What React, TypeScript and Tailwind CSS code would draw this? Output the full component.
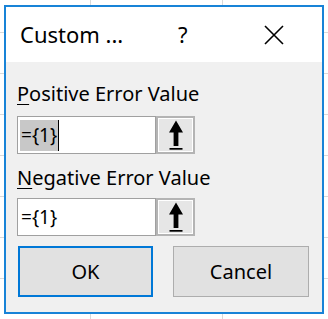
import React from "react";

function RefButton() {
  return (
    <div className="flex h-[38px] w-[39px] shrink-0 border-2 border-[#b4b4b4] bg-[#b4b4b4]">
      <div className="flex flex-1 items-center justify-center border border-white bg-[#e6e6e6]">
        <svg width="14" height="30" viewBox="0 0 14 30">
          <path d="M7 0.5 L0 12.5 L4.6 12.5 L4.6 26 L9.4 26 L9.4 12.5 L14 12.5 Z" fill="#000" />
          <rect x="0.5" y="28" width="13" height="1.7" fill="#000" />
        </svg>
      </div>
    </div>
  );
}

function Field({ selected }: { selected?: boolean }) {
  return (
    <div className="flex h-[38px] w-[178px]">
      <div className="flex flex-1 items-center border border-[#a0a0a0] bg-white pl-[2px]">
        <span
          className={
            selected
              ? "bg-[#c8c8c8] pl-[1px] pr-[1px] text-[19px] leading-[31px] text-black"
              : "pl-[1px] pr-[1px] text-[19px] leading-[31px] text-black"
          }
        >
          ={"{"}1{"}"}
        </span>
        {selected ? <span className="h-[31px] w-[1px] bg-black" /> : null}
      </div>
      <RefButton />
    </div>
  );
}

export default function App() {
  return (
    <div
      className="h-[319px] w-[328px] overflow-hidden bg-white bg-[linear-gradient(to_right,#d9d9d9_1px,transparent_1px),linear-gradient(to_bottom,#d9d9d9_1px,transparent_1px)] bg-[size:132px_41px] bg-[position:90px_32px] pl-[4px] pt-[5px]"
      style={{ fontFamily: '"Noto Sans", "Open Sans", sans-serif' }}
    >
      <div className="flex h-[309px] w-[320px] flex-col border-2 border-[#1883d7] bg-[#f0f0f0]">
        <div className="flex h-[55px] shrink-0 items-center bg-white pl-[14px] text-[22px] text-black">
          <span className="w-[158px]">Custom ...</span>
          <span className="w-[86px]">?</span>
          <svg width="20" height="20" viewBox="0 0 20 20">
            <path d="M1 1 L19 19 M19 1 L1 19" stroke="#000" strokeWidth="1.6" />
          </svg>
        </div>
        <div className="flex flex-col pl-[11px] pr-[12px]">
          <div className="mt-[19px] text-[20px] leading-[26px] text-black">
            <span className="underline decoration-1 underline-offset-3">P</span>ositive Error Value
          </div>
          <div className="mt-[9px]">
            <Field selected />
          </div>
          <div className="mt-[11px] text-[20px] leading-[26px] text-black">
            <span className="underline decoration-1 underline-offset-3">N</span>egative Error Value
          </div>
          <div className="mt-[7px]">
            <Field />
          </div>
          <div className="mt-[10px] flex gap-[20px] pl-[1px]">
            <button className="flex h-[51px] w-[135px] items-center justify-center border-2 border-[#0078d7] bg-[#e1e1e1] text-[20px] text-black">
              OK
            </button>
            <button className="flex h-[51px] w-[136px] items-center justify-center border border-[#adadad] bg-[#e1e1e1] text-[20px] text-black">
              Cancel
            </button>
          </div>
        </div>
      </div>
    </div>
  );
}
